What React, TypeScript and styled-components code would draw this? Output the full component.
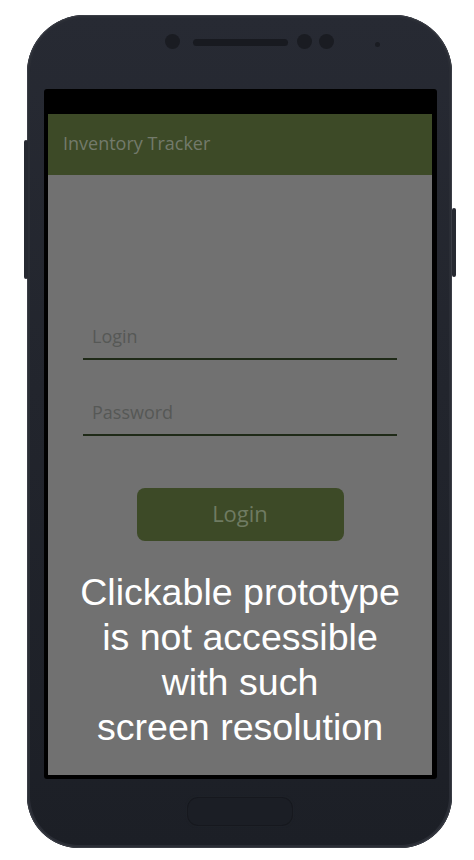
import styled, { createGlobalStyle } from 'styled-components';

const GlobalStyle = createGlobalStyle`
  html, body {
    margin: 0;
    padding: 0;
    background: #ffffff;
  }
  * {
    box-sizing: border-box;
  }
`;

const Page = styled.div`
  width: 474px;
  height: 860px;
  padding: 15px 0 0 27px;
  background: #ffffff;
`;

const Phone = styled.div`
  position: relative;
  width: 425px;
  height: 833px;
  border-radius: 58px 58px 52px 52px;
  background: linear-gradient(180deg, #272a33 0%, #22252d 45%, #1c1f26 100%);
  box-shadow: inset 0 0 0 1px #3a3d45, inset 0 0 0 3px #2a2d35;
  display: flex;
  flex-direction: column;
`;

const SideButton = styled.div<{ $side: 'left' | 'right'; $top: number; $height: number }>`
  position: absolute;
  top: ${(p) => p.$top}px;
  ${(p) => (p.$side === 'left' ? 'left: -3px;' : 'right: -4px;')}
  width: 4px;
  height: ${(p) => p.$height}px;
  border-radius: 2px;
  background: #262931;
`;

const TopBezel = styled.div`
  height: 74px;
  display: flex;
  align-items: flex-start;
  padding: 19px 0 0 138px;
`;

const Lens = styled.div<{ $size: number; $gap: number; $drop?: number }>`
  width: ${(p) => p.$size}px;
  height: ${(p) => p.$size}px;
  margin-left: ${(p) => p.$gap}px;
  margin-top: ${(p) => p.$drop ?? 0}px;
  border-radius: 50%;
  background: #1a1c22;
  flex-shrink: 0;
`;

const Speaker = styled.div`
  width: 95px;
  height: 7px;
  margin: 5px 0 0 13px;
  border-radius: 4px;
  background: #181a20;
`;

const Screen = styled.div`
  width: 393px;
  height: 690px;
  margin-left: 17px;
  padding: 25px 5px 4px 4px;
  background: #000000;
  border-radius: 3px;
`;

const Display = styled.div`
  height: 100%;
  background: #717171;
  display: flex;
  flex-direction: column;
  align-items: center;
`;

const AppBar = styled.div`
  align-self: stretch;
  height: 61px;
  background: #3d4a27;
  display: flex;
  align-items: center;
  padding: 0 0 4px 15px;
  font-family: 'Open Sans', 'Noto Sans', sans-serif;
  font-size: 18px;
  color: #737a6b;
`;

const Form = styled.div`
  width: 314px;
  margin-top: 147px;
  display: flex;
  flex-direction: column;
  gap: 38px;
`;

const Field = styled.input`
  width: 100%;
  height: 38px;
  padding: 0 9px 8px;
  border: none;
  border-bottom: 2px solid #1f2a18;
  background: transparent;
  outline: none;
  font-family: 'Open Sans', 'Noto Sans', sans-serif;
  font-size: 18px;
  color: #565856;
  &::placeholder {
    color: #565856;
  }
`;

const LoginButton = styled.button`
  width: 207px;
  height: 53px;
  margin-top: 52px;
  border: none;
  border-radius: 8px;
  background: #3d4a27;
  font-family: 'Open Sans', 'Noto Sans', sans-serif;
  font-size: 22px;
  color: #6f7b62;
  padding: 0 0 3px;
`;

const Notice = styled.p`
  margin: 29px 0 0;
  font-family: 'Liberation Sans', Arial, sans-serif;
  font-size: 37.6px;
  line-height: 45px;
  color: #ffffff;
  text-align: center;
`;

const BottomBezel = styled.div`
  flex: 1;
  display: flex;
  justify-content: center;
  padding-top: 19px;
`;

const HomeButton = styled.div`
  width: 104px;
  height: 27px;
  border-radius: 10px;
  background: #1b1e25;
  box-shadow: 0 0 0 1px #16181e, 0 0 2px 1px #23262d;
`;

export default function App() {
  return (
    <>
      <GlobalStyle />
      <Page>
        <Phone>
          <SideButton $side="left" $top={125} $height={139} />
          <SideButton $side="right" $top={193} $height={69} />
          <TopBezel>
            <Lens $size={15} $gap={0} />
            <Speaker />
            <Lens $size={15} $gap={9} />
            <Lens $size={15} $gap={7} />
            <Lens $size={5} $gap={41} $drop={8} />
          </TopBezel>
          <Screen>
            <Display>
              <AppBar>Inventory Tracker</AppBar>
              <Form>
                <Field placeholder="Login" readOnly />
                <Field placeholder="Password" type="password" readOnly />
              </Form>
              <LoginButton>Login</LoginButton>
              <Notice>
                Clickable prototype
                <br />
                is not accessible
                <br />
                with such
                <br />
                screen resolution
              </Notice>
            </Display>
          </Screen>
          <BottomBezel>
            <HomeButton />
          </BottomBezel>
        </Phone>
      </Page>
    </>
  );
}
